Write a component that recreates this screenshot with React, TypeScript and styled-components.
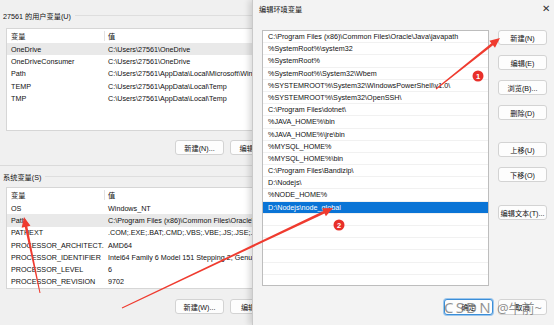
import React from "react";
import styled, { createGlobalStyle } from "styled-components";

const GlobalStyle = createGlobalStyle`
  html, body {
    margin: 0;
    padding: 0;
    background: #f0f0f0;
    overflow: hidden;
  }
  body {
    font-family: "Liberation Sans", "Noto Sans CJK SC", sans-serif;
  }
`;

const Screen = styled.div`
  position: relative;
  width: 554px;
  height: 325px;
  display: flex;
  overflow: hidden;
  background: #f0f0f0;
  font-family: "Liberation Sans", "Noto Sans CJK SC", sans-serif;
  font-size: 7.2px;
  color: #111;
`;

/* ---------- background window: 环境变量 ---------- */

const EnvWindow = styled.div`
  width: 252px;
  flex: none;
  overflow: hidden;
`;

const EnvInner = styled.div`
  width: 320px;
  padding-top: 9px;
  display: flex;
  flex-direction: column;
`;

const GroupLabel = styled.div<{ $top?: number }>`
  height: 13px;
  margin-top: ${(p) => p.$top ?? 0}px;
  padding-left: 3px;
  display: flex;
  align-items: center;
  gap: 4px;
  white-space: nowrap;

  &::after {
    content: "";
    flex: 1;
    border-top: 1px solid #dedede;
  }
`;

const VarTable = styled.div<{ $top: number; $height: number }>`
  margin: ${(p) => p.$top}px 0 0 6px;
  height: ${(p) => p.$height}px;
  background: #fff;
  border: 1px solid #d6d6d6;
  box-sizing: border-box;
  overflow: hidden;
`;

const VarRow = styled.div<{ $head?: boolean; $hot?: boolean }>`
  display: grid;
  grid-template-columns: 97px 1fr;
  height: ${(p) => (p.$head ? 14 : 12.3)}px;
  align-items: center;
  white-space: nowrap;
  background: ${(p) => (p.$hot ? "#e9e9e9" : "transparent")};

  span {
    padding-left: 4px;
    overflow: hidden;
  }
  span:last-child {
    border-left: 1px solid ${(p) => (p.$head ? "#e2e2e2" : "transparent")};
    padding-left: 3px;
  }
`;

const ButtonRow = styled.div<{ $top: number }>`
  margin-top: ${(p) => p.$top}px;
  padding-left: 175px;
  display: flex;
  gap: 6px;
`;

const WinButton = styled.div<{ $primary?: boolean }>`
  width: 49px;
  height: 15px;
  flex: none;
  box-sizing: border-box;
  display: flex;
  align-items: center;
  justify-content: center;
  background: #fdfdfd;
  border: 1px solid ${(p) => (p.$primary ? "#3b8ed8" : "#d3d3d3")};
  box-shadow: ${(p) => (p.$primary ? "0 0 0 1px #9cc6ec" : "none")};
  border-radius: 3px;
  white-space: nowrap;
`;

const Divider = styled.div`
  margin-top: 10px;
  border-top: 1px solid #dadada;
`;

/* ---------- dialog: 编辑环境变量 ---------- */

const Dialog = styled.div`
  flex: 1;
  z-index: 1;
  display: flex;
  flex-direction: column;
  background: #f3f3f3;
  border-left: 1px solid #c9c9c9;
  box-shadow: -3px 0 6px rgba(0, 0, 0, 0.14);
`;

const TitleBar = styled.div`
  height: 17px;
  display: flex;
  align-items: center;
  justify-content: space-between;
  padding: 0 4px 0 6px;
`;

const CloseGlyph = styled.span`
  font-size: 10px;
  line-height: 1;
  color: #333;
`;

const DialogBody = styled.div`
  display: flex;
  margin-top: 13px;
  padding-left: 9px;
  gap: 9px;
`;

const PathList = styled.div`
  width: 227px;
  height: 256px;
  flex: none;
  box-sizing: border-box;
  background: #fff;
  border: 1px solid #bdbdbd;
  overflow: hidden;
`;

const PathRow = styled.div<{ $selected?: boolean }>`
  height: 12.2px;
  line-height: 12.2px;
  padding-left: 5px;
  white-space: nowrap;
  box-sizing: border-box;
  border-bottom: 1px solid #f1f1f1;
  background: ${(p) => (p.$selected ? "#0a74d6" : "transparent")};
  color: ${(p) => (p.$selected ? "#fff" : "inherit")};
`;

const SideButtons = styled.div`
  display: flex;
  flex-direction: column;
  gap: 10px;
`;

const SideButton = styled(WinButton)<{ $extra?: number }>`
  margin-top: ${(p) => p.$extra ?? 0}px;
`;

const Footer = styled.div`
  margin-top: 13px;
  display: flex;
  justify-content: flex-end;
  gap: 5px;
  padding-right: 7px;

  ${WinButton} {
    height: 16px;
  }
`;

/* ---------- overlays ---------- */

const Annotations = styled.svg`
  position: absolute;
  inset: 0;
  z-index: 2;
  pointer-events: none;
`;

const Watermark = styled.div`
  position: absolute;
  left: 444px;
  top: 297px;
  z-index: 3;
  display: flex;
  align-items: baseline;
  gap: 4px;
  font-family: "Noto Sans", "Noto Sans CJK SC", sans-serif;
  color: rgba(105, 105, 105, 0.72);
  white-space: nowrap;
`;

const Brand = styled.span`
  font-size: 15px;
  letter-spacing: 2.2px;
`;

const Handle = styled.span`
  font-size: 13px;
`;

const userVars = [
  ["OneDrive", "C:\\Users\\27561\\OneDrive"],
  ["OneDriveConsumer", "C:\\Users\\27561\\OneDrive"],
  ["Path", "C:\\Users\\27561\\AppData\\Local\\Microsoft\\WindowsApps;"],
  ["TEMP", "C:\\Users\\27561\\AppData\\Local\\Temp"],
  ["TMP", "C:\\Users\\27561\\AppData\\Local\\Temp"],
];

const systemVars = [
  ["OS", "Windows_NT"],
  ["Path", "C:\\Program Files (x86)\\Common Files\\Oracle\\Java\\javapath;"],
  ["PATHEXT", ".COM;.EXE;.BAT;.CMD;.VBS;.VBE;.JS;.JSE;.WSF;.WSH;.MSC"],
  ["PROCESSOR_ARCHITECT...", "AMD64"],
  ["PROCESSOR_IDENTIFIER", "Intel64 Family 6 Model 151 Stepping 2, GenuineIntel"],
  ["PROCESSOR_LEVEL", "6"],
  ["PROCESSOR_REVISION", "9702"],
];

const paths = [
  "C:\\Program Files (x86)\\Common Files\\Oracle\\Java\\javapath",
  "%SystemRoot%\\system32",
  "%SystemRoot%",
  "%SystemRoot%\\System32\\Wbem",
  "%SYSTEMROOT%\\System32\\WindowsPowerShell\\v1.0\\",
  "%SYSTEMROOT%\\System32\\OpenSSH\\",
  "C:\\Program Files\\dotnet\\",
  "%JAVA_HOME%\\bin",
  "%JAVA_HOME%\\jre\\bin",
  "%MYSQL_HOME%",
  "%MYSQL_HOME%\\bin",
  "C:\\Program Files\\Bandizip\\",
  "D:\\Nodejs\\",
  "%NODE_HOME%",
  "D:\\Nodejs\\node_global",
  "", "", "", "", "", "", "",
];

// tapered red arrow, thin at the tail and wide at the head
function arrowPath(x1: number, y1: number, x2: number, y2: number) {
  const dx = x2 - x1;
  const dy = y2 - y1;
  const len = Math.hypot(dx, dy);
  const ux = dx / len;
  const uy = dy / len;
  const px = -uy;
  const py = ux;
  const head = 10;
  const bx = x2 - ux * head;
  const by = y2 - uy * head;
  const pt = (x: number, y: number, w: number) => `${x + px * w},${y + py * w}`;
  return [
    pt(x1, y1, 0.5),
    pt(bx, by, 1.3),
    pt(bx, by, 4.5),
    `${x2},${y2}`,
    pt(bx, by, -4.5),
    pt(bx, by, -1.3),
    pt(x1, y1, -0.5),
  ].join(" ");
}

const Marker: React.FC<{ x: number; y: number; n: string }> = ({ x, y, n }) => (
  <g>
    <circle cx={x} cy={y} r={5.5} fill="#e8302a" />
    <text
      x={x}
      y={y + 2.6}
      textAnchor="middle"
      fontSize="7.5"
      fontWeight="bold"
      fill="#fff"
      fontFamily="Liberation Sans, sans-serif"
    >
      {n}
    </text>
  </g>
);

const VarBlock: React.FC<{ rows: string[][]; hot: number; top: number; height: number }> = ({
  rows,
  hot,
  top,
  height,
}) => (
  <VarTable $top={top} $height={height}>
    <VarRow $head>
      <span>变量</span>
      <span>值</span>
    </VarRow>
    {rows.map(([k, v], i) => (
      <VarRow key={k + i} $hot={i === hot}>
        <span>{k}</span>
        <span>{v}</span>
      </VarRow>
    ))}
  </VarTable>
);

export default function App() {
  return (
    <>
      <GlobalStyle />
      <Screen>
        <EnvWindow>
          <EnvInner>
            <GroupLabel>27561 的用户变量(U)</GroupLabel>
            <VarBlock rows={userVars} hot={0} top={6} height={103} />
            <ButtonRow $top={9}>
              <WinButton>新建(N)...</WinButton>
              <WinButton>编辑(E)...</WinButton>
            </ButtonRow>
            <Divider />
            <GroupLabel $top={4}>系统变量(S)</GroupLabel>
            <VarBlock rows={systemVars} hot={1} top={4} height={102} />
            <ButtonRow $top={10}>
              <WinButton>新建(W)...</WinButton>
              <WinButton>编辑(I)...</WinButton>
            </ButtonRow>
          </EnvInner>
        </EnvWindow>

        <Dialog>
          <TitleBar>
            <span>编辑环境变量</span>
            <CloseGlyph>✕</CloseGlyph>
          </TitleBar>
          <DialogBody>
            <PathList>
              {paths.map((p, i) => (
                <PathRow key={i} $selected={i === 14}>
                  {p}
                </PathRow>
              ))}
            </PathList>
            <SideButtons>
              <SideButton>新建(N)</SideButton>
              <SideButton>编辑(E)</SideButton>
              <SideButton>浏览(B)...</SideButton>
              <SideButton>删除(D)</SideButton>
              <SideButton $extra={12}>上移(U)</SideButton>
              <SideButton>下移(O)</SideButton>
              <SideButton $extra={13}>编辑文本(T)...</SideButton>
            </SideButtons>
          </DialogBody>
          <Footer>
            <WinButton $primary>确定</WinButton>
            <WinButton>取消</WinButton>
          </Footer>
        </Dialog>

        <Annotations width={554} height={325} viewBox="0 0 554 325">
          <polygon points={arrowPath(436, 89, 500, 38)} fill="#ef3b2f" />
          <polygon points={arrowPath(122, 308, 333, 208)} fill="#ef3b2f" />
          <polygon points={arrowPath(40, 293, 24, 217)} fill="#ef3b2f" />
          <Marker x={478} y={76} n="1" />
          <Marker x={339} y={225} n="2" />
        </Annotations>
        <Watermark>
          <Brand>CSDN</Brand>
          <Handle>@牛前~</Handle>
        </Watermark>
      </Screen>
    </>
  );
}
